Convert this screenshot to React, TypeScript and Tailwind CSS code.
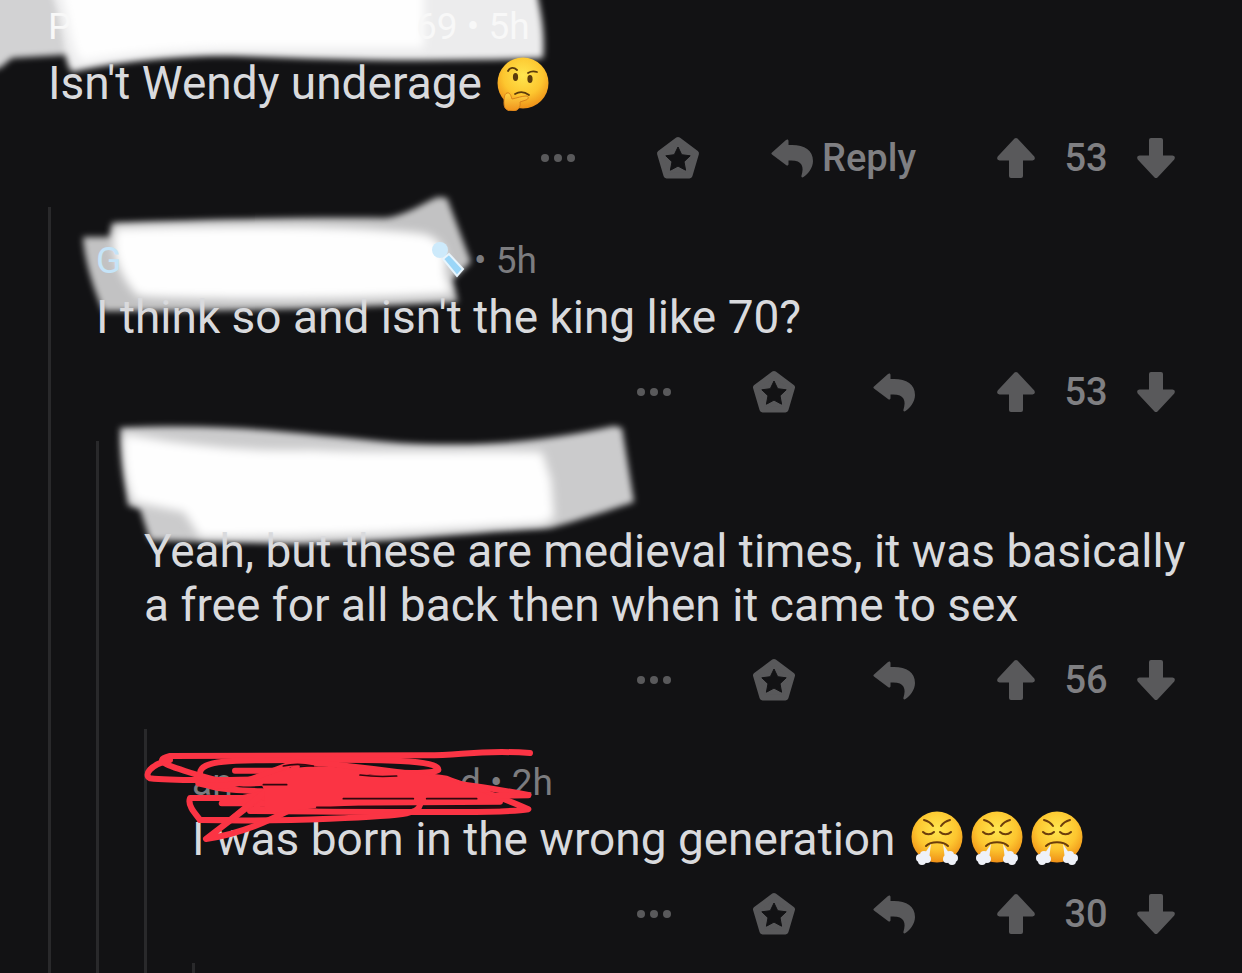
import type { ReactNode } from "react";

const WHITE = "#fefefe";

function Defs() {
  return (
    <svg className="absolute h-0 w-0" aria-hidden="true">
      <defs>
        <radialGradient id="face" cx="0.5" cy="0.35" r="0.65">
          <stop offset="0" stopColor="#ffe64f" />
          <stop offset="0.6" stopColor="#fdc62f" />
          <stop offset="1" stopColor="#ee8f17" />
        </radialGradient>
        <linearGradient id="hand" x1="0" y1="0" x2="0" y2="1">
          <stop offset="0" stopColor="#ffd545" />
          <stop offset="1" stopColor="#f0921c" />
        </linearGradient>
        <filter id="soft" x="-10%" y="-20%" width="120%" height="140%">
          <feGaussianBlur stdDeviation="3" />
        </filter>
        <filter id="softer" x="-10%" y="-20%" width="120%" height="140%">
          <feGaussianBlur stdDeviation="5" />
        </filter>
      </defs>
    </svg>
  );
}

function ThinkingFace() {
  return (
    <svg
      role="img"
      aria-label="thinking face"
      viewBox="0 0 52 54"
      className="-my-2 ml-1 inline-block h-[54px] w-[52px] align-[-4px]"
    >
      <circle cx="26" cy="26" r="25.5" fill="url(#face)" />
      <g fill="none" stroke="#5b3a0c" strokeWidth="1.8" strokeLinecap="round">
        <path d="M11 14c2-4 6-4 9-1" />
        <path d="M31 16c3-2 6-2 9-1" />
        <path d="M18 37c5-3 10-2 14 1" />
      </g>
      <ellipse cx="18.500" cy="20" rx="2.600" ry="4" fill="#5b3a0c" />
      <ellipse cx="33" cy="22" rx="2.600" ry="4" fill="#5b3a0c" />
      <path
        d="M10 36c3-1 4 3 5 6 5-1 10-3 14-3 3 0 3 3 0 4l-6 2c1 5-2 9-7 9-6 0-9-2-9-8 0-4 0-9 3-10z"
        fill="url(#hand)"
        stroke="#d9821a"
        strokeWidth="1"
      />
    </svg>
  );
}

function SteamFace() {
  return (
    <svg
      role="img"
      aria-label="face with steam from nose"
      viewBox="0 0 52 54"
      className="h-[54px] w-[52px]"
    >
      <circle cx="26" cy="26" r="25.500" fill="url(#face)" />
      <g fill="none" stroke="#6b3d0b" strokeWidth="2" strokeLinecap="round">
        <path d="M13 9c4 1 7 3 9 6" />
        <path d="M39 9c-4 1-7 3-9 6" />
        <path d="M12 21c3 3 8 3 11 0" />
        <path d="M29 21c3 3 8 3 11 0" />
        <path d="M15 35c5-5 17-5 22 0" />
      </g>
      <g fill="#eef1f8">
        <path d="M20 33l-8 12 6 3z" />
        <path d="M32 33l8 12-6 3z" />
        <circle cx="9" cy="47" r="4" />
        <circle cx="13" cy="44" r="4" />
        <circle cx="16" cy="48" r="4" />
        <circle cx="11" cy="50" r="4" />
        <circle cx="43" cy="47" r="4" />
        <circle cx="39" cy="44" r="4" />
        <circle cx="36" cy="48" r="4" />
        <circle cx="41" cy="50" r="4" />
      </g>
    </svg>
  );
}

function DotsIcon() {
  return (
    <svg viewBox="0 0 36 8" className="h-2 w-9" fill="currentColor">
      <circle cx="5" cy="4" r="4" />
      <circle cx="18" cy="4" r="4" />
      <circle cx="31" cy="4" r="4" />
    </svg>
  );
}

function AwardIcon() {
  return (
    <svg viewBox="0 0 44 44" className="size-11">
      <path
        d="M22 4L40 17.500L33.500 39.500H10.500L4 17.500Z"
        fill="currentColor"
        stroke="currentColor"
        strokeWidth="6"
        strokeLinejoin="round"
      />
      <path
        d="M22 11l3.700 7.700 8.500 1.100-6.200 5.900 1.600 8.500-7.600-4.100-7.600 4.100 1.600-8.500-6.200-5.900 8.500-1.100z"
        fill="#121214"
        stroke="#121214"
        strokeLinejoin="round"
      />
    </svg>
  );
}

function ReplyIcon() {
  return (
    <svg viewBox="0 0 44 44" className="size-11" fill="currentColor">
      <path d="M2 16.500L16 4C17.500 3 18.500 3.500 18.500 5V9C33 8 43 13 43 25C43 32 38 38 33.500 41C32 42 31 41 31.500 39.500C34.500 30 32 23.500 18.500 24.500V28C18.500 29.500 17.500 30 16 29L2 18.500C1.200 18 1.200 17 2 16.500Z" />
    </svg>
  );
}

function ArrowIcon({ down = false }: { down?: boolean }) {
  return (
    <svg
      viewBox="0 0 40 44"
      className={down ? "h-11 w-10 rotate-180" : "h-11 w-10"}
      fill="currentColor"
    >
      <path d="M18.500 2.500Q20 1.300 21.500 2.500L38.300 20.500Q40 24 36.500 24.500H27V40Q27 42 25 42H15Q13 42 13 40V24.500H3.500Q0 24 1.700 20.500Z" />
    </svg>
  );
}

function Actions({ votes, label }: { votes: number; label?: string }) {
  return (
    <div className="mt-[26px] flex h-11 items-center justify-end pr-[18px] text-[38px] font-medium text-[#7f7f82]">
      <button aria-label="More" className="text-[#59595b]">
        <DotsIcon />
      </button>
      <button aria-label="Give award" className="ml-20 text-[#59595b]">
        <AwardIcon />
      </button>
      <button
        aria-label="Reply"
        className={
          label
            ? "ml-[70px] flex items-center gap-2 leading-none"
            : "ml-[76px]"
        }
      >
        <span className="text-[#59595b]">
          <ReplyIcon />
        </span>
        {label}
      </button>
      <button aria-label="Upvote" className="ml-20 text-[#59595b]">
        <ArrowIcon />
      </button>
      <span className="w-[100px] text-center leading-none">{votes}</span>
      <button aria-label="Downvote" className="text-[#59595b]">
        <ArrowIcon down />
      </button>
    </div>
  );
}

type CommentProps = {
  header: ReactNode;
  cover: ReactNode;
  coverOnTop?: boolean;
  votes: number;
  label?: string;
  text: ReactNode;
  children?: ReactNode;
};

function Comment({
  header,
  cover,
  coverOnTop = false,
  votes,
  label,
  text,
  children,
}: CommentProps) {
  return (
    <article>
      <div className="relative pt-8 pb-[27px]">
        {!coverOnTop && cover}
        <div className="relative flex h-[42px] items-center text-[37px] leading-none whitespace-pre text-[#7c7c7f]">
          {header}
        </div>
        <p className="relative mt-[9px] text-[46px] leading-[54px] text-[#d9dadd]">
          {text}
        </p>
        <Actions votes={votes} label={label} />
        {coverOnTop && cover}
      </div>
      <div className="min-h-4 border-l-[3px] border-[#29292b] pl-[45px]">
        {children}
      </div>
    </article>
  );
}

function TopCover() {
  return (
    <svg
      viewBox="-20 -27 600 110"
      className="absolute top-0 left-[-68px] h-[110px] w-[600px]"
      aria-hidden="true"
    >
      <g filter="url(#soft)">
        <path d="M-30 -40H80V54L12 58L0 68L-30 75Z" fill="#d2d2d3" />
        <path
          d="M50 -40H532C536 0 546 20 543 58C430 62 330 60 240 56C190 54 110 62 72 72C62 60 66 30 50 -10Z"
          fill="#ececed"
        />
      </g>
      <path
        d="M60 -40H424V48H240C180 48 120 54 82 62C70 50 70 20 60 -10Z"
        fill={WHITE}
        filter="url(#softer)"
      />
    </svg>
  );
}

function SecondCover() {
  return (
    <svg
      viewBox="70 185 420 140"
      className="absolute top-[-22px] left-[-26px] h-[140px] w-[420px]"
      aria-hidden="true"
    >
      <path
        d="M83 237H110L112 223C200 220 300 217 385 218C405 216 425 202 438 197L447 198L471 262L452 280L458 302C340 309 220 311 103 311C94 290 84 260 83 237Z"
        fill="#c2c2c3"
        filter="url(#soft)"
      />
      <path
        d="M116 228C220 226 340 224 425 234C442 240 448 252 445 272L452 294C340 300 200 300 138 296C122 280 108 250 116 228Z"
        fill={WHITE}
        filter="url(#softer)"
      />
    </svg>
  );
}

function ThirdCover() {
  return (
    <svg
      viewBox="100 415 550 140"
      className="absolute top-[-26px] left-[-44px] h-[140px] w-[550px]"
      aria-hidden="true"
    >
      <path
        d="M120 428C230 422 310 435 400 443C490 448 550 440 614 426L622 428L634 502C610 510 580 520 550 528C470 532 400 542 300 544L150 540L140 509L128 505Z"
        fill="#cbcbcc"
        filter="url(#soft)"
      />
      <path
        d="M124 434C170 442 230 452 310 450C400 454 480 450 542 452L551 480L554 518L542 524C450 528 380 537 200 537L184 512L134 502C124 480 122 450 124 434Z"
        fill={WHITE}
        filter="url(#softer)"
      />
    </svg>
  );
}

function RedScribble() {
  return (
    <svg
      viewBox="0 0 1290 420"
      className="absolute top-px left-[-62px] h-[140px] w-[430px]"
      aria-hidden="true"
    >
      <g
        fill="none"
        stroke="#fb3444"
        strokeWidth="18"
        strokeLinecap="round"
        strokeLinejoin="round"
      >
        <path d="M1200 69C1040 58 990 78 880 76L120 78C60 92 120 110 220 140C350 180 420 150 560 145C780 140 900 140 1195 195" />
        <path d="M120 90C60 104 40 135 60 145C180 160 420 140 650 150" />
        <path d="M315 122H640C760 126 900 136 925 120C930 90 760 88 500 90C300 90 210 90 210 130C200 180 300 180 420 185C600 190 760 170 1000 180" />
        <path d="M205 160C300 190 400 130 500 96C640 100 820 130 950 146C1010 170 1110 198 1195 238C1130 250 850 246 360 243C480 190 800 190 1110 215L275 220C400 180 640 160 900 160" />
        <path d="M1195 196C900 200 600 205 180 204C170 230 205 260 210 270C470 276 780 260 830 250C880 240 880 220 850 170" />
        <path d="M400 195L228 327C340 310 420 270 480 240" />
        <path d="M210 270H300L400 190L500 110" />
      </g>
      <path
        d="M380 150C520 85 650 110 720 135C800 115 950 130 1060 190C1100 200 1120 215 1110 222C900 215 700 215 420 250C380 230 430 190 380 150Z"
        fill="#fb3444"
      />
      <g fill="none" stroke="#30080f" strokeWidth="5" strokeLinecap="round">
        <path d="M460 108Q500 98 550 108" />
        <path d="M690 135Q740 142 800 138" />
        <path d="M640 206H850" />
        <path d="M890 206H1040" />
        <path d="M560 232H840" />
        <path d="M890 232H1110" />
        <path d="M400 164H470" />
      </g>
    </svg>
  );
}

export default function App() {
  return (
    <main className="h-screen overflow-hidden bg-[#121214] px-12 font-[Roboto,sans-serif]">
      <Defs />
      <div className="-mt-[27px]">
        <Comment
          cover={<TopCover />}
          header={
            <>
              <span className="w-[368px] text-[#f8f8f8]">P</span>
              <span className="text-[#f8f8f8]">69 • 5h</span>
            </>
          }
          text={
            <>
              Isn't Wendy underage <ThinkingFace />
            </>
          }
          votes={53}
          label="Reply"
        >
          <Comment
            cover={<SecondCover />}
            header={
              <>
                <span className="w-[336px] text-[#c5e4f8]">G</span>
                <svg viewBox="0 0 34 36" className="mr-2 h-9 w-[34px]">
                  <circle cx="8" cy="8" r="8" fill="#cdeafb" />
                  <path
                    d="M11 17l6-5 14 15-6 7z"
                    fill="#9bd6f8"
                    stroke="#e8f5fd"
                    strokeWidth="2"
                  />
                </svg>
                <span>• 5h</span>
              </>
            }
            text="I think so and isn't the king like 70?"
            votes={53}
          >
            <Comment
              cover={<ThirdCover />}
              header={null}
              text="Yeah, but these are medieval times, it was basically a free for all back then when it came to sex"
              votes={56}
            >
              <Comment
                cover={<RedScribble />}
                coverOnTop
                header={
                  <>
                    <span className="w-[268px]">an</span>
                    <span>d • 2h</span>
                  </>
                }
                text={
                  <>
                    I was born in the wrong generation{" "}
                    <span className="-my-2 ml-1 inline-flex gap-2 align-[-10px]">
                      <SteamFace />
                      <SteamFace />
                      <SteamFace />
                    </span>
                  </>
                }
                votes={30}
              />
            </Comment>
          </Comment>
        </Comment>
      </div>
    </main>
  );
}
